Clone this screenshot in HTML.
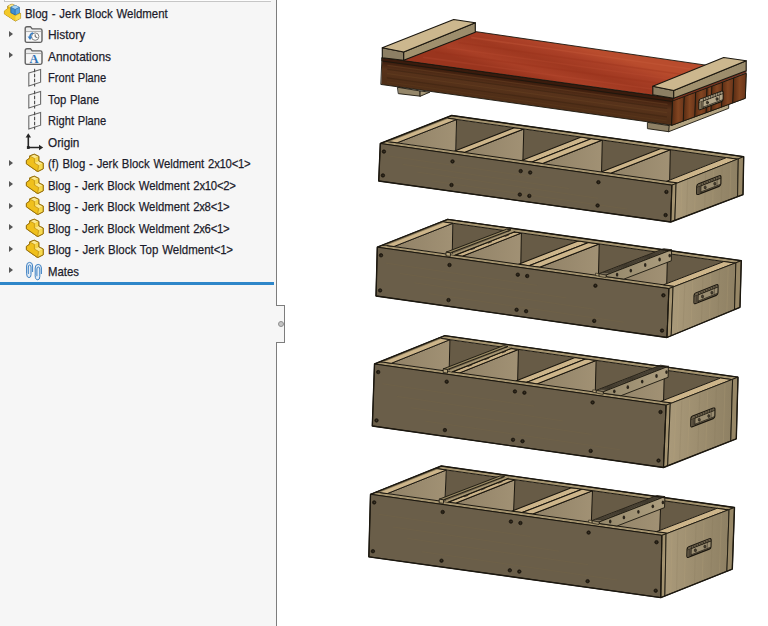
<!DOCTYPE html>
<html lang="en">
<head>
<meta charset="utf-8">
<title>Blog - Jerk Block Weldment</title>
<style>
html,body{margin:0;padding:0;background:#fff;}
body{width:768px;height:626px;position:relative;overflow:hidden;font-family:"Liberation Sans",sans-serif;}
#panel{position:absolute;left:0;top:0;width:276px;height:626px;background:#f6f6f6;}
#topline{position:absolute;left:4px;top:0;width:266px;height:1px;background:#fdfdfd;border-bottom:1px solid #c6c6c6;border-left:1px solid #c6c6c6;}
#vline{position:absolute;left:276px;top:0;width:1px;height:626px;background:#7d7d7d;}
#tab{position:absolute;left:276px;top:305px;width:9px;height:38px;background:#f6f6f6;border:1px solid #7d7d7d;border-left:none;box-sizing:border-box;}
#tabfill{position:absolute;left:275px;top:306px;width:3px;height:36px;background:#f6f6f6;}
#dot{position:absolute;left:277.5px;top:321px;width:4px;height:4px;border-radius:50%;background:#c4c4c4;border:1px solid #8f8f8f;box-sizing:content-box;}
#blue{position:absolute;left:0;top:282px;width:274px;height:3px;background:#2e86c9;}
.row{position:absolute;left:0;height:22px;width:276px;white-space:nowrap;}
.row span{position:absolute;top:0;line-height:22px;font-size:13.6px;color:#1b1b2a;-webkit-text-stroke:0.25px #1b1b2a;word-spacing:0.8px;}
.row span b{font-weight:normal;letter-spacing:-0.3px;}
.row svg{position:absolute;top:0;}
.arr{position:absolute;left:8.8px;top:6.4px;width:0;height:0;border-top:3.7px solid transparent;border-bottom:3.7px solid transparent;border-left:4.6px solid #565656;}
</style>
</head>
<body>
<div id="panel">
<div id="topline"></div>
<div class="row" style="top:2.90px">
<svg width="19" height="19" viewBox="0 0 20 20" style="left:3.4px;top:0.6px">
<polygon points="1.5,8.5 5,5.8 5,3.2 9.5,1.2 14.5,3.5 14.5,9 18.5,11 18.5,16 13,19 1.5,11.5" fill="#f0c21e" stroke="#9a7412" stroke-width="0.9" stroke-linejoin="round"/>
<polygon points="5,3.2 9.5,1.2 14.5,3.5 10,5.6" fill="#fbe98e"/>
<polygon points="1.5,8.5 5,5.8 10,8.5 13,15 13,19 1.5,11.5" fill="#f3c928"/>
<polygon points="13,14 18.5,11 18.5,16 13,19" fill="#f8dc55"/>
<polygon points="8.2,4.4 12.6,2.4 17.2,4.6 17.2,10.2 12.8,12.6 8.2,10.2" fill="#3f8fd2" stroke="#1f5f9e" stroke-width="0.8" stroke-linejoin="round"/>
<polygon points="8.2,4.4 12.6,2.4 17.2,4.6 12.8,6.8" fill="#a9d4f3"/>
<polygon points="12.8,6.8 17.2,4.6 17.2,10.2 12.8,12.6" fill="#5aa5e0"/>
<polyline points="8.2,4.4 12.8,6.8 17.2,4.6" fill="none" stroke="#1f5f9e" stroke-width="0.6"/>
<line x1="12.8" y1="6.8" x2="12.8" y2="12.6" stroke="#1f5f9e" stroke-width="0.6"/>
</svg>
<span id="t0" style="left:24.9px;transform-origin:0 50%;transform:scaleX(0.8398)">Blog - Jerk Block Weldment</span>
</div>
<div class="row" style="top:24.40px">
<div class="arr"></div>
<svg width="20" height="20" viewBox="0 0 20 20" style="left:24px;top:1px"><path d="M1.2,3.6 Q1.2,1.8 3,1.8 L6.6,1.8 L8.2,3.9 L16.4,3.9 Q18,3.9 18,5.6 L18,15.6 Q18,17.2 16.4,17.2 L2.8,17.2 Q1.2,17.2 1.2,15.6 Z" fill="#ececec" stroke="#626262" stroke-width="1.4" stroke-linejoin="round"/>
<path d="M1.8,6.6 L17.4,6.6" stroke="#9a9a9a" stroke-width="0.8"/>
<rect x="2.2" y="7.2" width="14.8" height="9.2" fill="#f7f7f7"/>
<circle cx="11.2" cy="11.6" r="3.7" fill="#fdfdfd" stroke="#777" stroke-width="0.9"/>
<path d="M11.2,9.4 L11.2,11.8 L13.4,12.6" fill="none" stroke="#333" stroke-width="0.8"/>
<path d="M9.2,8 Q5.8,8.6 6,12.4" fill="none" stroke="#3b7fc4" stroke-width="1.7"/>
<polygon points="3.6,11.6 8.4,11.8 6,15" fill="#3b7fc4"/>
</svg>
<span id="t1" style="left:48.2px;transform-origin:0 50%;transform:scaleX(0.8771)">History</span>
</div>
<div class="row" style="top:45.90px">
<div class="arr"></div>
<svg width="20" height="20" viewBox="0 0 20 20" style="left:24px;top:1px"><path d="M1.2,3.6 Q1.2,1.8 3,1.8 L6.6,1.8 L8.2,3.9 L16.4,3.9 Q18,3.9 18,5.6 L18,15.6 Q18,17.2 16.4,17.2 L2.8,17.2 Q1.2,17.2 1.2,15.6 Z" fill="#ececec" stroke="#626262" stroke-width="1.4" stroke-linejoin="round"/>
<path d="M1.8,6.6 L17.4,6.6" stroke="#9a9a9a" stroke-width="0.8"/>
<rect x="2.2" y="7.2" width="14.8" height="9.2" fill="#f7f7f7"/>
<text x="9.9" y="15.6" text-anchor="middle" font-family="Liberation Serif,serif" font-weight="bold" font-size="12.5" fill="#2f72b8">A</text>
</svg>
<span id="t2" style="left:48.2px;transform-origin:0 50%;transform:scaleX(0.8773)">Annotations</span>
</div>
<div class="row" style="top:67.40px">
<svg width="20" height="20" viewBox="0 0 20 20" style="left:24px;top:1px">
<polygon points="4.8,5 16.6,1.4 16.6,14.2 4.8,18" fill="none" stroke="#6b6b6b" stroke-width="1.1" stroke-linejoin="miter"/>
<line x1="10.6" y1="0.8" x2="10.6" y2="18.6" stroke="#4a4a4a" stroke-width="1.1" stroke-dasharray="3.4,1.6"/>
</svg>
<span id="t3" style="left:48.2px;transform-origin:0 50%;transform:scaleX(0.8188)">Front Plane</span>
</div>
<div class="row" style="top:88.90px">
<svg width="20" height="20" viewBox="0 0 20 20" style="left:24px;top:1px">
<polygon points="4.8,5 16.6,1.4 16.6,14.2 4.8,18" fill="none" stroke="#6b6b6b" stroke-width="1.1" stroke-linejoin="miter"/>
<line x1="10.6" y1="0.8" x2="10.6" y2="18.6" stroke="#4a4a4a" stroke-width="1.1" stroke-dasharray="3.4,1.6"/>
</svg>
<span id="t4" style="left:48.2px;transform-origin:0 50%;transform:scaleX(0.8324)">Top Plane</span>
</div>
<div class="row" style="top:110.40px">
<svg width="20" height="20" viewBox="0 0 20 20" style="left:24px;top:1px">
<polygon points="4.8,5 16.6,1.4 16.6,14.2 4.8,18" fill="none" stroke="#6b6b6b" stroke-width="1.1" stroke-linejoin="miter"/>
<line x1="10.6" y1="0.8" x2="10.6" y2="18.6" stroke="#4a4a4a" stroke-width="1.1" stroke-dasharray="3.4,1.6"/>
</svg>
<span id="t5" style="left:48.2px;transform-origin:0 50%;transform:scaleX(0.8186)">Right Plane</span>
</div>
<div class="row" style="top:131.90px">
<svg width="20" height="20" viewBox="0 0 20 20" style="left:24px;top:0px">
<path d="M4.3,16.6 L4.3,4.6 M3.2,15.5 L17,15.5" fill="none" stroke="#262626" stroke-width="1.6"/>
<polygon points="4.3,1.2 7,5.6 1.6,5.6" fill="#262626"/>
<polygon points="19.2,15.5 15,12.8 15,18.2" fill="#262626"/>
<rect x="2.9" y="14.1" width="2.8" height="2.8" fill="#262626"/>
</svg>
<span id="t6" style="left:48.2px;transform-origin:0 50%;transform:scaleX(0.8658)">Origin</span>
</div>
<div class="row" style="top:153.40px">
<div class="arr"></div>
<svg width="20" height="20" viewBox="0 0 20 20" style="left:24px;top:-1px">
<polygon points="2.4,8.4 5.6,6.2 5.6,4 10.2,2.2 14.8,4.4 14.8,9 19.2,11 19.2,16.8 13.6,19.6 2.4,11.8" fill="#f1c31f" stroke="#9a7412" stroke-width="1" stroke-linejoin="round"/>
<polygon points="5.6,4 10.2,2.2 14.8,4.4 10.4,6.4" fill="#fbe890"/>
<polygon points="10.4,6.4 14.8,4.4 14.8,9 10.4,11" fill="#f6d545"/>
<polygon points="10.4,11 14.8,9 19.2,11 14.6,13.4" fill="#fbe890"/>
<polygon points="14.6,13.4 19.2,11 19.2,16.8 13.6,19.6" fill="#f7d94e"/>
<polygon points="2.4,8.4 5.6,6.2 5.6,4 10.4,6.4 10.4,11 14.6,13.4 13.6,19.6 2.4,11.8" fill="#f0c01c"/>
<polyline points="5.6,4 10.4,6.4 10.4,11 14.6,13.4 13.6,19.6" fill="none" stroke="#b08416" stroke-width="0.6"/>
<polygon points="2.4,8.4 5.6,6.2 5.6,4 10.2,2.2 14.8,4.4 14.8,9 19.2,11 19.2,16.8 13.6,19.6 2.4,11.8" fill="none" stroke="#9a7412" stroke-width="1" stroke-linejoin="round"/>
</svg>
<span id="t7" style="left:48.2px;transform-origin:0 50%;transform:scaleX(0.8342)">(f) Blog - Jerk Block Weldment <b>2x10&lt;1&gt;</b></span>
</div>
<div class="row" style="top:174.90px">
<div class="arr"></div>
<svg width="20" height="20" viewBox="0 0 20 20" style="left:24px;top:-1px">
<polygon points="2.4,8.4 5.6,6.2 5.6,4 10.2,2.2 14.8,4.4 14.8,9 19.2,11 19.2,16.8 13.6,19.6 2.4,11.8" fill="#f1c31f" stroke="#9a7412" stroke-width="1" stroke-linejoin="round"/>
<polygon points="5.6,4 10.2,2.2 14.8,4.4 10.4,6.4" fill="#fbe890"/>
<polygon points="10.4,6.4 14.8,4.4 14.8,9 10.4,11" fill="#f6d545"/>
<polygon points="10.4,11 14.8,9 19.2,11 14.6,13.4" fill="#fbe890"/>
<polygon points="14.6,13.4 19.2,11 19.2,16.8 13.6,19.6" fill="#f7d94e"/>
<polygon points="2.4,8.4 5.6,6.2 5.6,4 10.4,6.4 10.4,11 14.6,13.4 13.6,19.6 2.4,11.8" fill="#f0c01c"/>
<polyline points="5.6,4 10.4,6.4 10.4,11 14.6,13.4 13.6,19.6" fill="none" stroke="#b08416" stroke-width="0.6"/>
<polygon points="2.4,8.4 5.6,6.2 5.6,4 10.2,2.2 14.8,4.4 14.8,9 19.2,11 19.2,16.8 13.6,19.6 2.4,11.8" fill="none" stroke="#9a7412" stroke-width="1" stroke-linejoin="round"/>
</svg>
<span id="t8" style="left:48.2px;transform-origin:0 50%;transform:scaleX(0.8330)">Blog - Jerk Block Weldment <b>2x10&lt;2&gt;</b></span>
</div>
<div class="row" style="top:196.40px">
<div class="arr"></div>
<svg width="20" height="20" viewBox="0 0 20 20" style="left:24px;top:-1px">
<polygon points="2.4,8.4 5.6,6.2 5.6,4 10.2,2.2 14.8,4.4 14.8,9 19.2,11 19.2,16.8 13.6,19.6 2.4,11.8" fill="#f1c31f" stroke="#9a7412" stroke-width="1" stroke-linejoin="round"/>
<polygon points="5.6,4 10.2,2.2 14.8,4.4 10.4,6.4" fill="#fbe890"/>
<polygon points="10.4,6.4 14.8,4.4 14.8,9 10.4,11" fill="#f6d545"/>
<polygon points="10.4,11 14.8,9 19.2,11 14.6,13.4" fill="#fbe890"/>
<polygon points="14.6,13.4 19.2,11 19.2,16.8 13.6,19.6" fill="#f7d94e"/>
<polygon points="2.4,8.4 5.6,6.2 5.6,4 10.4,6.4 10.4,11 14.6,13.4 13.6,19.6 2.4,11.8" fill="#f0c01c"/>
<polyline points="5.6,4 10.4,6.4 10.4,11 14.6,13.4 13.6,19.6" fill="none" stroke="#b08416" stroke-width="0.6"/>
<polygon points="2.4,8.4 5.6,6.2 5.6,4 10.2,2.2 14.8,4.4 14.8,9 19.2,11 19.2,16.8 13.6,19.6 2.4,11.8" fill="none" stroke="#9a7412" stroke-width="1" stroke-linejoin="round"/>
</svg>
<span id="t9" style="left:48.2px;transform-origin:0 50%;transform:scaleX(0.8319)">Blog - Jerk Block Weldment <b>2x8&lt;1&gt;</b></span>
</div>
<div class="row" style="top:217.90px">
<div class="arr"></div>
<svg width="20" height="20" viewBox="0 0 20 20" style="left:24px;top:-1px">
<polygon points="2.4,8.4 5.6,6.2 5.6,4 10.2,2.2 14.8,4.4 14.8,9 19.2,11 19.2,16.8 13.6,19.6 2.4,11.8" fill="#f1c31f" stroke="#9a7412" stroke-width="1" stroke-linejoin="round"/>
<polygon points="5.6,4 10.2,2.2 14.8,4.4 10.4,6.4" fill="#fbe890"/>
<polygon points="10.4,6.4 14.8,4.4 14.8,9 10.4,11" fill="#f6d545"/>
<polygon points="10.4,11 14.8,9 19.2,11 14.6,13.4" fill="#fbe890"/>
<polygon points="14.6,13.4 19.2,11 19.2,16.8 13.6,19.6" fill="#f7d94e"/>
<polygon points="2.4,8.4 5.6,6.2 5.6,4 10.4,6.4 10.4,11 14.6,13.4 13.6,19.6 2.4,11.8" fill="#f0c01c"/>
<polyline points="5.6,4 10.4,6.4 10.4,11 14.6,13.4 13.6,19.6" fill="none" stroke="#b08416" stroke-width="0.6"/>
<polygon points="2.4,8.4 5.6,6.2 5.6,4 10.2,2.2 14.8,4.4 14.8,9 19.2,11 19.2,16.8 13.6,19.6 2.4,11.8" fill="none" stroke="#9a7412" stroke-width="1" stroke-linejoin="round"/>
</svg>
<span id="t10" style="left:48.2px;transform-origin:0 50%;transform:scaleX(0.8319)">Blog - Jerk Block Weldment <b>2x6&lt;1&gt;</b></span>
</div>
<div class="row" style="top:239.40px">
<div class="arr"></div>
<svg width="20" height="20" viewBox="0 0 20 20" style="left:24px;top:-1px">
<polygon points="2.4,8.4 5.6,6.2 5.6,4 10.2,2.2 14.8,4.4 14.8,9 19.2,11 19.2,16.8 13.6,19.6 2.4,11.8" fill="#f1c31f" stroke="#9a7412" stroke-width="1" stroke-linejoin="round"/>
<polygon points="5.6,4 10.2,2.2 14.8,4.4 10.4,6.4" fill="#fbe890"/>
<polygon points="10.4,6.4 14.8,4.4 14.8,9 10.4,11" fill="#f6d545"/>
<polygon points="10.4,11 14.8,9 19.2,11 14.6,13.4" fill="#fbe890"/>
<polygon points="14.6,13.4 19.2,11 19.2,16.8 13.6,19.6" fill="#f7d94e"/>
<polygon points="2.4,8.4 5.6,6.2 5.6,4 10.4,6.4 10.4,11 14.6,13.4 13.6,19.6 2.4,11.8" fill="#f0c01c"/>
<polyline points="5.6,4 10.4,6.4 10.4,11 14.6,13.4 13.6,19.6" fill="none" stroke="#b08416" stroke-width="0.6"/>
<polygon points="2.4,8.4 5.6,6.2 5.6,4 10.2,2.2 14.8,4.4 14.8,9 19.2,11 19.2,16.8 13.6,19.6 2.4,11.8" fill="none" stroke="#9a7412" stroke-width="1" stroke-linejoin="round"/>
</svg>
<span id="t11" style="left:48.2px;transform-origin:0 50%;transform:scaleX(0.8449)">Blog - Jerk Block Top Weldment<b>&lt;1&gt;</b></span>
</div>
<div class="row" style="top:260.90px">
<div class="arr"></div>
<svg width="20" height="20" viewBox="0 0 20 20" style="left:24px;top:0px">
<path d="M2.6,12.8 L2.6,5 Q2.6,1.4 5.6,1.4 Q8.6,1.4 8.6,5 L8.6,11" fill="#e3edf7" stroke="#3d80c2" stroke-width="1"/>
<path d="M2.6,12.6 Q2.6,16.6 5,16.6 Q7,16.6 7,13.6 L7,6 Q7,4 5.6,4 Q4.3,4 4.3,6 L4.3,13" fill="#e3edf7" stroke="#3d80c2" stroke-width="1"/>
<path d="M11.2,14.8 L11.2,7 Q11.2,3.4 14.2,3.4 Q17.4,3.4 17.4,7 L17.4,13" fill="#e3edf7" stroke="#3d80c2" stroke-width="1"/>
<path d="M11.2,14.6 Q11.2,18.8 13.8,18.8 Q15.8,18.8 15.8,15.6 L15.8,8 Q15.8,6 14.3,6 Q12.9,6 12.9,8 L12.9,15.2" fill="#e3edf7" stroke="#3d80c2" stroke-width="1"/>
</svg>
<span id="t12" style="left:48.2px;transform-origin:0 50%;transform:scaleX(0.8344)">Mates</span>
</div>
<div id="blue"></div>
</div>
<div id="vline"></div>
<div id="tab"></div>
<div id="tabfill"></div>
<div id="dot"></div>
<svg width="768" height="626" viewBox="0 0 768 626" style="position:absolute;left:0;top:0">
<defs>
<linearGradient id="g1" gradientUnits="userSpaceOnUse" x1="0" y1="70" x2="0" y2="110"><stop offset="0" stop-color="#5f3a20"/><stop offset="1" stop-color="#4a2c17"/></linearGradient>
<linearGradient id="wood" gradientUnits="userSpaceOnUse" x1="400" y1="62" x2="394" y2="104"><stop offset="0" stop-color="#38190b"/><stop offset="0.22" stop-color="#58331b"/><stop offset="0.5" stop-color="#4f2e17"/><stop offset="0.8" stop-color="#58351b"/><stop offset="1" stop-color="#3f220f"/></linearGradient>
<linearGradient id="g2" gradientUnits="userSpaceOnUse" x1="672.9" y1="0" x2="684.5" y2="0"><stop offset="0" stop-color="#5f2f15"/><stop offset="0.45" stop-color="#824521"/><stop offset="1" stop-color="#69341a"/></linearGradient>
<linearGradient id="g3" gradientUnits="userSpaceOnUse" x1="684.5" y1="0" x2="696" y2="0"><stop offset="0" stop-color="#5f2f15"/><stop offset="0.45" stop-color="#824521"/><stop offset="1" stop-color="#69341a"/></linearGradient>
<linearGradient id="g4" gradientUnits="userSpaceOnUse" x1="696" y1="0" x2="707.3" y2="0"><stop offset="0" stop-color="#5f2f15"/><stop offset="0.45" stop-color="#824521"/><stop offset="1" stop-color="#69341a"/></linearGradient>
<linearGradient id="g5" gradientUnits="userSpaceOnUse" x1="707.3" y1="0" x2="712.2" y2="0"><stop offset="0" stop-color="#5f2f15"/><stop offset="0.45" stop-color="#824521"/><stop offset="1" stop-color="#69341a"/></linearGradient>
<linearGradient id="g6" gradientUnits="userSpaceOnUse" x1="712.2" y1="0" x2="722.8" y2="0"><stop offset="0" stop-color="#5f2f15"/><stop offset="0.45" stop-color="#824521"/><stop offset="1" stop-color="#69341a"/></linearGradient>
<linearGradient id="g7" gradientUnits="userSpaceOnUse" x1="722.8" y1="0" x2="734" y2="0"><stop offset="0" stop-color="#5f2f15"/><stop offset="0.45" stop-color="#824521"/><stop offset="1" stop-color="#69341a"/></linearGradient>
<linearGradient id="g8" gradientUnits="userSpaceOnUse" x1="734" y1="0" x2="746.2" y2="0"><stop offset="0" stop-color="#5f2f15"/><stop offset="0.45" stop-color="#824521"/><stop offset="1" stop-color="#69341a"/></linearGradient>
<linearGradient id="red" gradientUnits="userSpaceOnUse" x1="560" y1="42" x2="548" y2="84"><stop offset="0" stop-color="#b94c2d"/><stop offset="0.22" stop-color="#ab4027"/><stop offset="0.5" stop-color="#9f3820"/><stop offset="0.78" stop-color="#a93f26"/><stop offset="1" stop-color="#9a351e"/></linearGradient>
<linearGradient id="g9" gradientUnits="userSpaceOnUse" x1="404" y1="0" x2="475" y2="0"><stop offset="0" stop-color="#a3936f"/><stop offset="1" stop-color="#9a8b6b"/></linearGradient>
<linearGradient id="g10" gradientUnits="userSpaceOnUse" x1="674" y1="0" x2="746" y2="0"><stop offset="0" stop-color="#a3936f"/><stop offset="1" stop-color="#9a8b6b"/></linearGradient>
<clipPath id="c_b1"><polygon points="397.1,142.8 666.6,181.3 726.4,157.6 456.6,119.5"/></clipPath>
<linearGradient id="g11" gradientUnits="userSpaceOnUse" x1="397.1" y1="0" x2="456.6" y2="0"><stop offset="0" stop-color="#918267"/><stop offset="1" stop-color="#a19174"/></linearGradient>
<linearGradient id="g12" gradientUnits="userSpaceOnUse" x1="464.2" y1="0" x2="523.8" y2="0"><stop offset="0" stop-color="#918267"/><stop offset="1" stop-color="#a19174"/></linearGradient>
<linearGradient id="g13" gradientUnits="userSpaceOnUse" x1="542.6" y1="0" x2="602.3" y2="0"><stop offset="0" stop-color="#918267"/><stop offset="1" stop-color="#a19174"/></linearGradient>
<linearGradient id="g14" gradientUnits="userSpaceOnUse" x1="610.6" y1="0" x2="670.3" y2="0"><stop offset="0" stop-color="#918267"/><stop offset="1" stop-color="#a19174"/></linearGradient>
<linearGradient id="g15" gradientUnits="userSpaceOnUse" x1="676.1" y1="0" x2="738.3" y2="0"><stop offset="0" stop-color="#a99979"/><stop offset="1" stop-color="#8e8063"/></linearGradient>
<clipPath id="c_b2"><polygon points="394,246.5 663.6,284.8 723.9,261.5 452.8,223.3"/></clipPath>
<linearGradient id="g16" gradientUnits="userSpaceOnUse" x1="394" y1="0" x2="452.8" y2="0"><stop offset="0" stop-color="#918267"/><stop offset="1" stop-color="#a19174"/></linearGradient>
<linearGradient id="g17" gradientUnits="userSpaceOnUse" x1="462.3" y1="0" x2="521.4" y2="0"><stop offset="0" stop-color="#918267"/><stop offset="1" stop-color="#a19174"/></linearGradient>
<linearGradient id="g18" gradientUnits="userSpaceOnUse" x1="539.6" y1="0" x2="599.2" y2="0"><stop offset="0" stop-color="#918267"/><stop offset="1" stop-color="#a19174"/></linearGradient>
<linearGradient id="g19" gradientUnits="userSpaceOnUse" x1="607.6" y1="0" x2="667.5" y2="0"><stop offset="0" stop-color="#918267"/><stop offset="1" stop-color="#a19174"/></linearGradient>
<linearGradient id="g20" gradientUnits="userSpaceOnUse" x1="606" y1="0" x2="671.6" y2="0"><stop offset="0" stop-color="#95886b"/><stop offset="1" stop-color="#ac9d7e"/></linearGradient>
<linearGradient id="g21" gradientUnits="userSpaceOnUse" x1="673.1" y1="0" x2="735.9" y2="0"><stop offset="0" stop-color="#a99979"/><stop offset="1" stop-color="#8e8063"/></linearGradient>
<clipPath id="c_b3"><polygon points="391.2,363.3 660.8,401.4 720.6,378 449.9,339.7"/></clipPath>
<linearGradient id="g22" gradientUnits="userSpaceOnUse" x1="391.2" y1="0" x2="449.9" y2="0"><stop offset="0" stop-color="#918267"/><stop offset="1" stop-color="#a19174"/></linearGradient>
<linearGradient id="g23" gradientUnits="userSpaceOnUse" x1="459.5" y1="0" x2="518.4" y2="0"><stop offset="0" stop-color="#918267"/><stop offset="1" stop-color="#a19174"/></linearGradient>
<linearGradient id="g24" gradientUnits="userSpaceOnUse" x1="536.8" y1="0" x2="596.1" y2="0"><stop offset="0" stop-color="#918267"/><stop offset="1" stop-color="#a19174"/></linearGradient>
<linearGradient id="g25" gradientUnits="userSpaceOnUse" x1="604.8" y1="0" x2="664.4" y2="0"><stop offset="0" stop-color="#918267"/><stop offset="1" stop-color="#a19174"/></linearGradient>
<linearGradient id="g26" gradientUnits="userSpaceOnUse" x1="603.2" y1="0" x2="668.4" y2="0"><stop offset="0" stop-color="#95886b"/><stop offset="1" stop-color="#ac9d7e"/></linearGradient>
<linearGradient id="g27" gradientUnits="userSpaceOnUse" x1="670.3" y1="0" x2="732.6" y2="0"><stop offset="0" stop-color="#a99979"/><stop offset="1" stop-color="#8e8063"/></linearGradient>
<clipPath id="c_b4"><polygon points="387.2,493.6 656.6,531.6 717.1,508.3 446.3,470"/></clipPath>
<linearGradient id="g28" gradientUnits="userSpaceOnUse" x1="387.2" y1="0" x2="446.3" y2="0"><stop offset="0" stop-color="#918267"/><stop offset="1" stop-color="#a19174"/></linearGradient>
<linearGradient id="g29" gradientUnits="userSpaceOnUse" x1="455.5" y1="0" x2="514.9" y2="0"><stop offset="0" stop-color="#918267"/><stop offset="1" stop-color="#a19174"/></linearGradient>
<linearGradient id="g30" gradientUnits="userSpaceOnUse" x1="532.7" y1="0" x2="592.5" y2="0"><stop offset="0" stop-color="#918267"/><stop offset="1" stop-color="#a19174"/></linearGradient>
<linearGradient id="g31" gradientUnits="userSpaceOnUse" x1="600.7" y1="0" x2="660.8" y2="0"><stop offset="0" stop-color="#918267"/><stop offset="1" stop-color="#a19174"/></linearGradient>
<linearGradient id="g32" gradientUnits="userSpaceOnUse" x1="599.1" y1="0" x2="664.9" y2="0"><stop offset="0" stop-color="#95886b"/><stop offset="1" stop-color="#ac9d7e"/></linearGradient>
<linearGradient id="g33" gradientUnits="userSpaceOnUse" x1="666.1" y1="0" x2="729.1" y2="0"><stop offset="0" stop-color="#a99979"/><stop offset="1" stop-color="#8e8063"/></linearGradient>
</defs>
<g id="top" stroke-linecap="round">
<polygon points="397.8,87.3 420.3,91 420.3,96.2 398.7,93.7" fill="#95876a" stroke="#1b170f" stroke-width="0.9" stroke-linejoin="round"/>
<polygon points="420.3,91 429.8,92.2 420.3,96.2" fill="#a79877" stroke="#1b170f" stroke-width="0.9" stroke-linejoin="round"/>
<polygon points="668.7,125.4 728.7,103.6 728.7,108.3 668.7,131.7" fill="#b3a380" stroke="#1b170f" stroke-width="0.9" stroke-linejoin="round"/>
<polygon points="647.8,122.4 669.2,125.6 668.7,131.7 647.8,128.7" fill="#8f8165" stroke="#1b170f" stroke-width="0.9" stroke-linejoin="round"/>
<polygon points="382.3,57.8 673.2,98.6 672,125.2 381.2,84.5" fill="url(#wood)" stroke="#1b170f" stroke-width="0.9" stroke-linejoin="round"/>
<line x1="387.8" y1="65.3" x2="667.1" y2="104.4" stroke="#6e4525" stroke-width="1.2" opacity="0.45"/>
<line x1="387.7" y1="69.3" x2="666.9" y2="108.4" stroke="#36200f" stroke-width="1.2" opacity="0.45"/>
<line x1="387.5" y1="73.6" x2="666.7" y2="112.7" stroke="#6a4423" stroke-width="1.2" opacity="0.4"/>
<line x1="387.3" y1="77.8" x2="666.5" y2="116.9" stroke="#36200f" stroke-width="1.2" opacity="0.4"/>
<line x1="387.2" y1="81.8" x2="666.3" y2="120.9" stroke="#64401f" stroke-width="1.2" opacity="0.35"/>
<polygon points="382.3,57.6 673.3,98.2 673.3,101.6 382.3,61" fill="#3a1b0d" stroke="#1b170f" stroke-width="0.9" stroke-linejoin="round"/>
<polygon points="672.9,100.8 746.2,73.3 745.3,98.3 672,125.2" fill="#7a4122" stroke="#1b170f" stroke-width="0.9" stroke-linejoin="round"/>
<polygon points="672.9,100.8 684.5,96.4 683.6,120.9 672,125.2" fill="url(#g2)" stroke="#1b170f" stroke-width="0.9" stroke-linejoin="round"/>
<polygon points="684.5,96.4 696,92.1 695.1,116.7 683.6,120.9" fill="url(#g3)" stroke="#1b170f" stroke-width="0.9" stroke-linejoin="round"/>
<polygon points="696,92.1 707.3,87.9 706.4,112.6 695.1,116.7" fill="url(#g4)" stroke="#1b170f" stroke-width="0.9" stroke-linejoin="round"/>
<polygon points="707.3,87.9 712.2,86.1 711.3,110.8 706.4,112.6" fill="url(#g5)" stroke="#1b170f" stroke-width="0.9" stroke-linejoin="round"/>
<polygon points="712.2,86.1 722.8,82.1 721.9,106.9 711.3,110.8" fill="url(#g6)" stroke="#1b170f" stroke-width="0.9" stroke-linejoin="round"/>
<polygon points="722.8,82.1 734,77.9 733.1,102.8 721.9,106.9" fill="url(#g7)" stroke="#1b170f" stroke-width="0.9" stroke-linejoin="round"/>
<polygon points="734,77.9 746.2,73.3 745.3,98.3 733.1,102.8" fill="url(#g8)" stroke="#1b170f" stroke-width="0.9" stroke-linejoin="round"/>
<polygon points="673.5,98.3 746.2,70.8 746.2,72.6 673.3,100.4" fill="#8f3520" stroke="#1b170f" stroke-width="0.6" stroke-linejoin="round"/>
<path d="M700.7 99.1 L721.5 91.3 Q723.2 90.7 723.1 92.5 L723 99.3 Q723 101.1 721.3 101.7 L700.5 109.5 Q698.8 110.1 698.9 108.3 L699 101.5 Q699 99.7 700.7 99.1 Z" fill="#a0937a" stroke="#1b170f" stroke-width="1.25" stroke-linejoin="round"/>
<polygon points="700.1,99.6 722,91.4 722.7,93.8 699.5,102.5" fill="#a79a80"/>
<line x1="703.3" y1="98.4" x2="703.5" y2="100.9" stroke="#2a241a" stroke-width="0.7"/>
<line x1="705.7" y1="97.5" x2="705.9" y2="100" stroke="#2a241a" stroke-width="0.7"/>
<line x1="708.1" y1="96.6" x2="708.3" y2="99.1" stroke="#2a241a" stroke-width="0.7"/>
<line x1="710.5" y1="95.7" x2="710.7" y2="98.2" stroke="#2a241a" stroke-width="0.7"/>
<line x1="712.9" y1="94.8" x2="713.1" y2="97.3" stroke="#2a241a" stroke-width="0.7"/>
<line x1="715.3" y1="93.9" x2="715.4" y2="96.4" stroke="#2a241a" stroke-width="0.7"/>
<line x1="717.6" y1="93" x2="717.8" y2="95.5" stroke="#2a241a" stroke-width="0.7"/>
<line x1="720" y1="92.1" x2="720.2" y2="94.7" stroke="#2a241a" stroke-width="0.7"/>
<line x1="699.3" y1="102.6" x2="722.8" y2="93.8" stroke="#1b170f" stroke-width="0.9"/>
<polygon points="699.4,102.6 703.3,101.1 703.1,108.1 699.3,109.4" fill="#8a7d63"/>
<line x1="701.4" y1="102.2" x2="701.3" y2="108.4" stroke="#3a3327" stroke-width="0.6"/>
<line x1="703.3" y1="101.1" x2="703.1" y2="108.3" stroke="#1b170f" stroke-width="0.9"/>
<polygon points="703.6,101.4 722.5,94.3 722.4,99.7 703.5,106.8" fill="#b5a88b"/>
<line x1="703.2" y1="107.1" x2="722.5" y2="99.8" stroke="#2f291f" stroke-width="0.8"/>
<ellipse cx="707.4" cy="102.6" rx="1.05" ry="1.5" fill="#4b4234" stroke="#1b170f" stroke-width="0.6"/>
<ellipse cx="717" cy="99" rx="1.05" ry="1.5" fill="#4b4234" stroke="#1b170f" stroke-width="0.6"/>
<line x1="719.4" y1="95.3" x2="719.3" y2="101" stroke="#3a3327" stroke-width="0.6"/>
<polygon points="402.5,60.3 475,31.5 706.3,65.2 652.8,94.9" fill="url(#red)" stroke="#1b170f" stroke-width="0.9" stroke-linejoin="round"/>
<line x1="471.8" y1="37.6" x2="690.4" y2="69" stroke="#cc6040" stroke-width="1.6" opacity="0.3"/>
<line x1="459.3" y1="42.8" x2="680.9" y2="74.3" stroke="#98301a" stroke-width="1.6" opacity="0.3"/>
<line x1="447.5" y1="47.7" x2="671.9" y2="79.2" stroke="#c05236" stroke-width="1.6" opacity="0.22"/>
<line x1="436.3" y1="52.3" x2="663.4" y2="83.9" stroke="#98301a" stroke-width="1.6" opacity="0.3"/>
<line x1="423.8" y1="57.4" x2="653.9" y2="89.2" stroke="#bd5036" stroke-width="1.6" opacity="0.25"/>
<polygon points="382.3,47.8 403.7,52 403.7,60.3 382.3,57.8" fill="#8c7f64" stroke="#1b170f" stroke-width="1.15" stroke-linejoin="round"/>
<polygon points="403.7,52 475.3,22.8 475.3,32.3 403.7,60.3" fill="url(#g9)" stroke="#1b170f" stroke-width="1.15" stroke-linejoin="round"/>
<polygon points="382.3,47.8 453.7,19.5 475.3,22.8 403.7,52" fill="#ccb78e" stroke="#1b170f" stroke-width="1.15" stroke-linejoin="round"/>
<polygon points="652.8,86.3 673.7,90.5 673.7,98.3 652.8,94.7" fill="#8c7f64" stroke="#1b170f" stroke-width="1.15" stroke-linejoin="round"/>
<polygon points="673.7,90.5 746.2,60.8 746.2,70.8 673.7,98.3" fill="url(#g10)" stroke="#1b170f" stroke-width="1.15" stroke-linejoin="round"/>
<polygon points="652.8,86.3 723.7,57.5 746.2,60.8 673.7,90.5" fill="#ccb78e" stroke="#1b170f" stroke-width="1.15" stroke-linejoin="round"/>
</g>
<g id="b1">
<g clip-path="url(#c_b1)">
<polygon points="456.6,119.5 726.4,157.6 725.6,195.5 455.5,158.1" fill="#675b46"/>
<polygon points="397.1,142.8 456.6,119.5 455.5,158.1 395.5,180.4" fill="url(#g11)" stroke="#1b170f" stroke-width="1.0" stroke-linejoin="round"/>
<polygon points="464.2,152.4 523.8,129 522.7,167.4 462.7,189.8" fill="url(#g12)" stroke="#1b170f" stroke-width="1.0" stroke-linejoin="round"/>
<polygon points="454.8,151.1 464.2,152.4 523.8,129 514.4,127.7" fill="#cdb58a" stroke="#1b170f" stroke-width="1.1" stroke-linejoin="round"/>
<polygon points="542.6,163.6 602.3,140.1 601.4,178.3 541.3,200.9" fill="url(#g13)" stroke="#1b170f" stroke-width="1.0" stroke-linejoin="round"/>
<polygon points="521.6,160.6 532.1,162.1 591.8,138.6 581.3,137.1" fill="#cdb58a" stroke="#1b170f" stroke-width="1.1" stroke-linejoin="round"/>
<polygon points="532.1,162.1 542.6,163.6 602.3,140.1 591.8,138.6" fill="#cdb58a" stroke="#1b170f" stroke-width="1.1" stroke-linejoin="round"/>
<polygon points="610.6,173.3 670.3,149.7 669.5,187.7 609.3,210.4" fill="url(#g14)" stroke="#1b170f" stroke-width="1.0" stroke-linejoin="round"/>
<polygon points="601.2,172 610.6,173.3 670.3,149.7 661,148.4" fill="#cdb58a" stroke="#1b170f" stroke-width="1.1" stroke-linejoin="round"/>
</g>
<polygon points="445.5,117.9 737.5,159.2 743.7,156.7 451.7,115.5" fill="#a5946f" stroke="#1b170f" stroke-width="1.0" stroke-linejoin="round"/>
<polygon points="380.3,143.5 671.9,185.2 677.6,182.9 386,141.3" fill="#a5946f" stroke="#1b170f" stroke-width="1.0" stroke-linejoin="round"/>
<polygon points="386,141.3 397.1,142.8 456.6,119.5 445.5,117.9" fill="#cdb58a" stroke="#1b170f" stroke-width="1.0" stroke-linejoin="round"/>
<polygon points="386,141.3 389.2,141.7 448.7,118.4 445.5,117.9" fill="#857759"/>
<polygon points="666.6,181.3 677.6,182.9 737.5,159.2 726.4,157.6" fill="#cdb58a" stroke="#1b170f" stroke-width="1.0" stroke-linejoin="round"/>
<polygon points="380.3,143.5 671.9,185.2 670.7,222 378.7,181" fill="#6a5e49" stroke="#1b170f" stroke-width="1.0" stroke-linejoin="round"/>
<line x1="388.6" y1="156" x2="540.2" y2="178.1" stroke="#7d6a45" stroke-width="1.0" opacity="0.2"/>
<line x1="402.9" y1="164.4" x2="569.2" y2="188.6" stroke="#7d6a45" stroke-width="1.0" opacity="0.2"/>
<line x1="417.2" y1="172.1" x2="598.2" y2="198.3" stroke="#7d6a45" stroke-width="1.0" opacity="0.2"/>
<line x1="431.6" y1="180.9" x2="627.1" y2="209" stroke="#7d6a45" stroke-width="1.0" opacity="0.2"/>
<polygon points="671.9,185.2 676.1,183.5 674.9,220.4 670.7,222" fill="#a3926f" stroke="#1b170f" stroke-width="0.9" stroke-linejoin="round"/>
<polygon points="676.1,183.5 738.3,158.8 737.6,196.7 674.9,220.4" fill="url(#g15)" stroke="#1b170f" stroke-width="0.9" stroke-linejoin="round"/>
<line x1="681.9" y1="182.3" x2="680.9" y2="217.1" stroke="#c2ad82" stroke-width="1.1" opacity="0.16"/>
<line x1="687.7" y1="180" x2="686.6" y2="214.9" stroke="#7d6f54" stroke-width="1.1" opacity="0.16"/>
<line x1="695.6" y1="176.9" x2="694.6" y2="211.9" stroke="#c2ad82" stroke-width="1.1" opacity="0.16"/>
<line x1="705.6" y1="172.9" x2="704.7" y2="208" stroke="#7d6f54" stroke-width="1.1" opacity="0.16"/>
<line x1="713.5" y1="169.8" x2="712.7" y2="205" stroke="#c2ad82" stroke-width="1.1" opacity="0.16"/>
<line x1="722.1" y1="166.4" x2="721.3" y2="201.8" stroke="#7d6f54" stroke-width="1.1" opacity="0.16"/>
<line x1="730.8" y1="163" x2="730" y2="198.5" stroke="#c2ad82" stroke-width="1.1" opacity="0.16"/>
<polygon points="738.3,158.8 743.7,156.7 743,194.7 737.6,196.7" fill="#978766" stroke="#1b170f" stroke-width="0.9" stroke-linejoin="round"/>
<polygon points="380.3,143.5 451.7,115.5 743.7,156.7 743,194.7 670.7,222 378.7,181" fill="none" stroke="#1b170f" stroke-width="1.35" stroke-linejoin="round"/>
<line x1="671.9" y1="185.2" x2="670.7" y2="222" stroke="#1b170f" stroke-width="1.2"/>
<circle cx="383.9" cy="151.6" r="1.75" fill="#241e14" stroke="#17130c" stroke-width="0.7"/>
<circle cx="384.1" cy="151.5" r="0.45" fill="#5a503e"/>
<circle cx="382.9" cy="175.4" r="1.75" fill="#241e14" stroke="#17130c" stroke-width="0.7"/>
<circle cx="383.1" cy="175.3" r="0.45" fill="#5a503e"/>
<circle cx="452.5" cy="161.4" r="1.75" fill="#241e14" stroke="#17130c" stroke-width="0.7"/>
<circle cx="452.6" cy="161.3" r="0.45" fill="#5a503e"/>
<circle cx="451.5" cy="185" r="1.75" fill="#241e14" stroke="#17130c" stroke-width="0.7"/>
<circle cx="451.7" cy="184.9" r="0.45" fill="#5a503e"/>
<circle cx="520.7" cy="171.1" r="1.75" fill="#241e14" stroke="#17130c" stroke-width="0.7"/>
<circle cx="520.9" cy="171" r="0.45" fill="#5a503e"/>
<circle cx="519.8" cy="194.6" r="1.75" fill="#241e14" stroke="#17130c" stroke-width="0.7"/>
<circle cx="520" cy="194.5" r="0.45" fill="#5a503e"/>
<circle cx="530.2" cy="172.5" r="1.75" fill="#241e14" stroke="#17130c" stroke-width="0.7"/>
<circle cx="530.3" cy="172.4" r="0.45" fill="#5a503e"/>
<circle cx="529.3" cy="195.9" r="1.75" fill="#241e14" stroke="#17130c" stroke-width="0.7"/>
<circle cx="529.5" cy="195.8" r="0.45" fill="#5a503e"/>
<circle cx="598.4" cy="182.2" r="1.75" fill="#241e14" stroke="#17130c" stroke-width="0.7"/>
<circle cx="598.6" cy="182.1" r="0.45" fill="#5a503e"/>
<circle cx="597.6" cy="205.5" r="1.75" fill="#241e14" stroke="#17130c" stroke-width="0.7"/>
<circle cx="597.8" cy="205.4" r="0.45" fill="#5a503e"/>
<circle cx="666.4" cy="191.9" r="1.75" fill="#241e14" stroke="#17130c" stroke-width="0.7"/>
<circle cx="666.6" cy="191.8" r="0.45" fill="#5a503e"/>
<circle cx="665.6" cy="215.1" r="1.75" fill="#241e14" stroke="#17130c" stroke-width="0.7"/>
<circle cx="665.8" cy="215" r="0.45" fill="#5a503e"/>
<path d="M698.6 183.9 L719.3 175.9 Q720.9 175.2 720.9 177 L720.8 183.8 Q720.7 185.6 719 186.3 L698.3 194.3 Q696.7 195 696.7 193.2 L696.8 186.4 Q696.9 184.6 698.6 183.9 Z" fill="#786c55" stroke="#1b170f" stroke-width="1.25" stroke-linejoin="round"/>
<polygon points="698,184.4 719.8,176 720.5,178.4 697.4,187.3" fill="#6a5f4a"/>
<line x1="701.2" y1="183.2" x2="701.3" y2="185.7" stroke="#2a241a" stroke-width="0.7"/>
<line x1="703.5" y1="182.3" x2="703.7" y2="184.8" stroke="#2a241a" stroke-width="0.7"/>
<line x1="705.9" y1="181.4" x2="706.1" y2="183.9" stroke="#2a241a" stroke-width="0.7"/>
<line x1="708.3" y1="180.4" x2="708.5" y2="182.9" stroke="#2a241a" stroke-width="0.7"/>
<line x1="710.7" y1="179.5" x2="710.9" y2="182" stroke="#2a241a" stroke-width="0.7"/>
<line x1="713" y1="178.6" x2="713.2" y2="181.1" stroke="#2a241a" stroke-width="0.7"/>
<line x1="715.4" y1="177.7" x2="715.6" y2="180.2" stroke="#2a241a" stroke-width="0.7"/>
<line x1="717.8" y1="176.8" x2="718" y2="179.3" stroke="#2a241a" stroke-width="0.7"/>
<line x1="697.2" y1="187.4" x2="720.6" y2="178.4" stroke="#1b170f" stroke-width="0.9"/>
<polygon points="697.3,187.4 701.1,185.9 701,192.9 697.1,194.2" fill="#5f5543"/>
<line x1="699.2" y1="187" x2="699.1" y2="193.2" stroke="#3a3327" stroke-width="0.6"/>
<line x1="701.1" y1="185.9" x2="701" y2="193.1" stroke="#1b170f" stroke-width="0.9"/>
<polygon points="701.5,186.2 720.3,178.9 720.2,184.3 701.4,191.6" fill="#9a8d71"/>
<line x1="701" y1="191.9" x2="720.3" y2="184.4" stroke="#2f291f" stroke-width="0.8"/>
<ellipse cx="705.2" cy="187.4" rx="1.05" ry="1.5" fill="#4b4234" stroke="#1b170f" stroke-width="0.6"/>
<ellipse cx="714.8" cy="183.7" rx="1.05" ry="1.5" fill="#4b4234" stroke="#1b170f" stroke-width="0.6"/>
<line x1="717.1" y1="179.9" x2="717" y2="185.6" stroke="#3a3327" stroke-width="0.6"/>
</g>
<g id="b2">
<g clip-path="url(#c_b2)">
<polygon points="452.8,223.3 723.9,261.5 722.6,308.3 452,270" fill="#675b46"/>
<polygon points="394,246.5 452.8,223.3 452,270 392.7,295.2" fill="url(#g16)" stroke="#1b170f" stroke-width="1.0" stroke-linejoin="round"/>
<polygon points="462.3,256.2 521.4,233 520.5,279.7 460.9,304.9" fill="url(#g17)" stroke="#1b170f" stroke-width="1.0" stroke-linejoin="round"/>
<polygon points="455.3,255.2 462.3,256.2 521.4,233 514.4,232" fill="#c9b186" stroke="#1b170f" stroke-width="1.1" stroke-linejoin="round"/>
<line x1="470.6" y1="249.8" x2="474.9" y2="248.1" stroke="#3d352a" stroke-width="1.2"/>
<line x1="487.7" y1="243.1" x2="491.9" y2="241.5" stroke="#3d352a" stroke-width="1.2"/>
<line x1="504.7" y1="236.4" x2="508.9" y2="234.8" stroke="#3d352a" stroke-width="1.2"/>
<polygon points="539.6,267.2 599.2,243.9 598.1,290.7 538,315.9" fill="url(#g18)" stroke="#1b170f" stroke-width="1.0" stroke-linejoin="round"/>
<polygon points="518.6,264.2 529.1,265.7 588.6,242.5 578.1,241" fill="#cdb58a" stroke="#1b170f" stroke-width="1.1" stroke-linejoin="round"/>
<polygon points="529.1,265.7 539.6,267.2 599.2,243.9 588.6,242.5" fill="#cdb58a" stroke="#1b170f" stroke-width="1.1" stroke-linejoin="round"/>
<polygon points="607.6,276.8 667.5,253.6 666.3,300.4 605.9,325.5" fill="url(#g19)" stroke="#1b170f" stroke-width="1.0" stroke-linejoin="round"/>
<polygon points="598.3,275.5 607.6,276.8 667.5,253.6 658.2,252.3" fill="#cdb58a" stroke="#1b170f" stroke-width="1.1" stroke-linejoin="round"/>
</g>
<polygon points="441.6,221.7 735,263.1 741.3,260.7 447.7,219.3" fill="#a5946f" stroke="#1b170f" stroke-width="1.0" stroke-linejoin="round"/>
<polygon points="377.3,247.2 668.9,288.6 674.7,286.4 382.9,245" fill="#a5946f" stroke="#1b170f" stroke-width="1.0" stroke-linejoin="round"/>
<polygon points="382.9,245 394,246.5 452.8,223.3 441.6,221.7" fill="#cdb58a" stroke="#1b170f" stroke-width="1.0" stroke-linejoin="round"/>
<polygon points="382.9,245 386.1,245.4 444.8,222.2 441.6,221.7" fill="#857759"/>
<polygon points="663.6,284.8 674.7,286.4 735,263.1 723.9,261.5" fill="#cdb58a" stroke="#1b170f" stroke-width="1.0" stroke-linejoin="round"/>
<polygon points="450.4,254.4 454.4,255 515.1,231.4 511,230.8" fill="#a5946f"/>
<line x1="454.4" y1="255.3" x2="515.1" y2="231.5" stroke="#1b170f" stroke-width="0.9"/>
<polygon points="446,252.2 450.4,252.8 511,229.8 506.6,229.2" fill="#93845f" stroke="#1b170f" stroke-width="0.9" stroke-linejoin="round"/>
<polygon points="446,252.2 450.4,252.8 450.4,256.4 446,255.8" fill="#b3a27c" stroke="#1b170f" stroke-width="0.8" stroke-linejoin="round"/>
<polygon points="598.9,273.7 606,275.1 671.6,249.8 663.7,248.7" fill="#7d725d" stroke="#1b170f" stroke-width="0.8" stroke-linejoin="round"/>
<line x1="602.7" y1="272.6" x2="610.5" y2="272.8" stroke="#1f1a12" stroke-width="0.65"/>
<line x1="605" y1="271.7" x2="612.8" y2="271.9" stroke="#1f1a12" stroke-width="0.65"/>
<line x1="607.3" y1="270.8" x2="615.2" y2="271" stroke="#1f1a12" stroke-width="0.65"/>
<line x1="609.6" y1="269.9" x2="617.5" y2="270.1" stroke="#1f1a12" stroke-width="0.65"/>
<line x1="612" y1="269" x2="619.8" y2="269.2" stroke="#1f1a12" stroke-width="0.65"/>
<line x1="614.3" y1="268.1" x2="622.1" y2="268.3" stroke="#1f1a12" stroke-width="0.65"/>
<line x1="616.6" y1="267.2" x2="624.5" y2="267.4" stroke="#1f1a12" stroke-width="0.65"/>
<line x1="618.9" y1="266.3" x2="626.8" y2="266.5" stroke="#1f1a12" stroke-width="0.65"/>
<line x1="621.3" y1="265.4" x2="629.1" y2="265.6" stroke="#1f1a12" stroke-width="0.65"/>
<line x1="623.6" y1="264.5" x2="631.5" y2="264.7" stroke="#1f1a12" stroke-width="0.65"/>
<line x1="625.9" y1="263.6" x2="633.8" y2="263.8" stroke="#1f1a12" stroke-width="0.65"/>
<line x1="628.2" y1="262.7" x2="636.1" y2="262.9" stroke="#1f1a12" stroke-width="0.65"/>
<line x1="630.6" y1="261.8" x2="638.4" y2="262" stroke="#1f1a12" stroke-width="0.65"/>
<line x1="632.9" y1="260.9" x2="640.8" y2="261.1" stroke="#1f1a12" stroke-width="0.65"/>
<line x1="635.2" y1="260" x2="643.1" y2="260.2" stroke="#1f1a12" stroke-width="0.65"/>
<line x1="637.5" y1="259.1" x2="645.4" y2="259.3" stroke="#1f1a12" stroke-width="0.65"/>
<line x1="639.9" y1="258.2" x2="647.7" y2="258.4" stroke="#1f1a12" stroke-width="0.65"/>
<line x1="642.2" y1="257.3" x2="650.1" y2="257.5" stroke="#1f1a12" stroke-width="0.65"/>
<line x1="644.5" y1="256.4" x2="652.4" y2="256.6" stroke="#1f1a12" stroke-width="0.65"/>
<line x1="646.8" y1="255.5" x2="654.7" y2="255.7" stroke="#1f1a12" stroke-width="0.65"/>
<line x1="649.2" y1="254.6" x2="657.1" y2="254.8" stroke="#1f1a12" stroke-width="0.65"/>
<line x1="651.5" y1="253.7" x2="659.4" y2="253.9" stroke="#1f1a12" stroke-width="0.65"/>
<line x1="653.8" y1="252.8" x2="661.7" y2="253" stroke="#1f1a12" stroke-width="0.65"/>
<line x1="656.2" y1="251.9" x2="664" y2="252.1" stroke="#1f1a12" stroke-width="0.65"/>
<line x1="658.5" y1="251" x2="666.4" y2="251.2" stroke="#1f1a12" stroke-width="0.65"/>
<line x1="660.8" y1="250.1" x2="668.7" y2="250.3" stroke="#1f1a12" stroke-width="0.65"/>
<polygon points="606,275.1 671.6,249.8 671.3,260.8 623.9,279.1 606.6,276.7" fill="url(#g20)" stroke="#1b170f" stroke-width="0.9" stroke-linejoin="round"/>
<ellipse cx="617.1" cy="274.7" rx="1.25" ry="1.9" fill="#2b251b"/>
<ellipse cx="630.8" cy="270.6" rx="1.25" ry="1.9" fill="#2b251b"/>
<ellipse cx="645.2" cy="265" rx="1.25" ry="1.9" fill="#2b251b"/>
<ellipse cx="659.6" cy="259.5" rx="1.25" ry="1.9" fill="#2b251b"/>
<ellipse cx="669.7" cy="255.6" rx="1.25" ry="1.9" fill="#2b251b"/>
<polygon points="595.6,273.1 599,273.7 598.9,276.2 595.6,275.5" fill="#b9a780" stroke="#1b170f" stroke-width="0.6" stroke-linejoin="round"/>
<polygon points="599.2,273.8 606,275.1 606,277.7 599.1,276.4" fill="#9c8d6d" stroke="#1b170f" stroke-width="0.6" stroke-linejoin="round"/>
<polygon points="377.3,247.2 668.9,288.6 667,337.5 376,296" fill="#6a5e49" stroke="#1b170f" stroke-width="1.0" stroke-linejoin="round"/>
<line x1="385.7" y1="263.1" x2="537.2" y2="285.4" stroke="#7d6a45" stroke-width="1.0" opacity="0.2"/>
<line x1="400" y1="273.5" x2="566" y2="297.8" stroke="#7d6a45" stroke-width="1.0" opacity="0.2"/>
<line x1="414.4" y1="282.8" x2="594.9" y2="309.3" stroke="#7d6a45" stroke-width="1.0" opacity="0.2"/>
<line x1="428.7" y1="293.7" x2="623.7" y2="322.2" stroke="#7d6a45" stroke-width="1.0" opacity="0.2"/>
<polygon points="668.9,288.6 673.1,287 671.2,335.7 667,337.5" fill="#a3926f" stroke="#1b170f" stroke-width="0.9" stroke-linejoin="round"/>
<polygon points="673.1,287 735.9,262.8 734.5,309.6 671.2,335.7" fill="url(#g21)" stroke="#1b170f" stroke-width="0.9" stroke-linejoin="round"/>
<line x1="679" y1="286.2" x2="677.3" y2="331.8" stroke="#c2ad82" stroke-width="1.1" opacity="0.16"/>
<line x1="684.8" y1="283.9" x2="683.1" y2="329.4" stroke="#7d6f54" stroke-width="1.1" opacity="0.16"/>
<line x1="692.7" y1="280.8" x2="691.1" y2="326.1" stroke="#c2ad82" stroke-width="1.1" opacity="0.16"/>
<line x1="702.9" y1="276.9" x2="701.4" y2="321.9" stroke="#7d6f54" stroke-width="1.1" opacity="0.16"/>
<line x1="710.8" y1="273.8" x2="709.4" y2="318.6" stroke="#c2ad82" stroke-width="1.1" opacity="0.16"/>
<line x1="719.5" y1="270.5" x2="718.1" y2="314.9" stroke="#7d6f54" stroke-width="1.1" opacity="0.16"/>
<line x1="728.2" y1="267.1" x2="726.9" y2="311.3" stroke="#c2ad82" stroke-width="1.1" opacity="0.16"/>
<polygon points="735.9,262.8 741.3,260.7 740,307.3 734.5,309.6" fill="#978766" stroke="#1b170f" stroke-width="0.9" stroke-linejoin="round"/>
<polygon points="377.3,247.2 447.7,219.3 741.3,260.7 740,307.3 667,337.5 376,296" fill="none" stroke="#1b170f" stroke-width="1.35" stroke-linejoin="round"/>
<line x1="668.9" y1="288.6" x2="667" y2="337.5" stroke="#1b170f" stroke-width="1.2"/>
<circle cx="381" cy="255.3" r="1.75" fill="#241e14" stroke="#17130c" stroke-width="0.7"/>
<circle cx="381.2" cy="255.2" r="0.45" fill="#5a503e"/>
<circle cx="380.1" cy="290.4" r="1.75" fill="#241e14" stroke="#17130c" stroke-width="0.7"/>
<circle cx="380.2" cy="290.3" r="0.45" fill="#5a503e"/>
<circle cx="449.5" cy="265" r="1.75" fill="#241e14" stroke="#17130c" stroke-width="0.7"/>
<circle cx="449.7" cy="264.9" r="0.45" fill="#5a503e"/>
<circle cx="448.5" cy="300.1" r="1.75" fill="#241e14" stroke="#17130c" stroke-width="0.7"/>
<circle cx="448.6" cy="300" r="0.45" fill="#5a503e"/>
<circle cx="517.8" cy="274.7" r="1.75" fill="#241e14" stroke="#17130c" stroke-width="0.7"/>
<circle cx="517.9" cy="274.6" r="0.45" fill="#5a503e"/>
<circle cx="516.6" cy="309.8" r="1.75" fill="#241e14" stroke="#17130c" stroke-width="0.7"/>
<circle cx="516.8" cy="309.7" r="0.45" fill="#5a503e"/>
<circle cx="527.2" cy="276" r="1.75" fill="#241e14" stroke="#17130c" stroke-width="0.7"/>
<circle cx="527.4" cy="275.9" r="0.45" fill="#5a503e"/>
<circle cx="526.1" cy="311.2" r="1.75" fill="#241e14" stroke="#17130c" stroke-width="0.7"/>
<circle cx="526.2" cy="311.1" r="0.45" fill="#5a503e"/>
<circle cx="595.4" cy="285.7" r="1.75" fill="#241e14" stroke="#17130c" stroke-width="0.7"/>
<circle cx="595.6" cy="285.6" r="0.45" fill="#5a503e"/>
<circle cx="594.2" cy="320.9" r="1.75" fill="#241e14" stroke="#17130c" stroke-width="0.7"/>
<circle cx="594.3" cy="320.8" r="0.45" fill="#5a503e"/>
<circle cx="663.4" cy="295.3" r="1.75" fill="#241e14" stroke="#17130c" stroke-width="0.7"/>
<circle cx="663.5" cy="295.2" r="0.45" fill="#5a503e"/>
<circle cx="662" cy="330.6" r="1.75" fill="#241e14" stroke="#17130c" stroke-width="0.7"/>
<circle cx="662.2" cy="330.5" r="0.45" fill="#5a503e"/>
<path d="M695.8 293.1 L716.4 284.9 Q718.1 284.2 718 286 L717.9 292.8 Q717.9 294.6 716.2 295.3 L695.6 303.5 Q693.9 304.2 694 302.4 L694.1 295.6 Q694.1 293.8 695.8 293.1 Z" fill="#786c55" stroke="#1b170f" stroke-width="1.25" stroke-linejoin="round"/>
<polygon points="695.2,293.6 717,285 717.7,287.4 694.6,296.6" fill="#6a5f4a"/>
<line x1="698.4" y1="292.4" x2="698.6" y2="294.9" stroke="#2a241a" stroke-width="0.7"/>
<line x1="700.8" y1="291.4" x2="700.9" y2="293.9" stroke="#2a241a" stroke-width="0.7"/>
<line x1="703.1" y1="290.5" x2="703.3" y2="293" stroke="#2a241a" stroke-width="0.7"/>
<line x1="705.5" y1="289.5" x2="705.7" y2="292" stroke="#2a241a" stroke-width="0.7"/>
<line x1="707.9" y1="288.6" x2="708" y2="291.1" stroke="#2a241a" stroke-width="0.7"/>
<line x1="710.2" y1="287.6" x2="710.4" y2="290.2" stroke="#2a241a" stroke-width="0.7"/>
<line x1="712.6" y1="286.7" x2="712.8" y2="289.2" stroke="#2a241a" stroke-width="0.7"/>
<line x1="715" y1="285.8" x2="715.1" y2="288.3" stroke="#2a241a" stroke-width="0.7"/>
<line x1="694.4" y1="296.6" x2="717.7" y2="287.3" stroke="#1b170f" stroke-width="0.9"/>
<polygon points="694.5,296.6 698.3,295.1 698.2,302.1 694.4,303.4" fill="#5f5543"/>
<line x1="696.5" y1="296.2" x2="696.3" y2="302.4" stroke="#3a3327" stroke-width="0.6"/>
<line x1="698.3" y1="295.1" x2="698.2" y2="302.3" stroke="#1b170f" stroke-width="0.9"/>
<polygon points="698.7,295.3 717.5,287.8 717.3,293.2 698.6,300.7" fill="#9a8d71"/>
<line x1="698.2" y1="301.1" x2="717.4" y2="293.4" stroke="#2f291f" stroke-width="0.8"/>
<ellipse cx="702.5" cy="296.5" rx="1.05" ry="1.5" fill="#4b4234" stroke="#1b170f" stroke-width="0.6"/>
<ellipse cx="711.9" cy="292.7" rx="1.05" ry="1.5" fill="#4b4234" stroke="#1b170f" stroke-width="0.6"/>
<line x1="714.3" y1="288.9" x2="714.2" y2="294.6" stroke="#3a3327" stroke-width="0.6"/>
</g>
<g id="b3">
<g clip-path="url(#c_b3)">
<polygon points="449.9,339.7 720.6,378 718.9,439.7 448.5,401.1" fill="#675b46"/>
<polygon points="391.2,363.3 449.9,339.7 448.5,401.1 389.1,425.3" fill="url(#g22)" stroke="#1b170f" stroke-width="1.0" stroke-linejoin="round"/>
<polygon points="459.5,372.9 518.4,349.4 516.9,410.9 457.2,435" fill="url(#g23)" stroke="#1b170f" stroke-width="1.0" stroke-linejoin="round"/>
<polygon points="452.5,372 459.5,372.9 518.4,349.4 511.4,348.4" fill="#c9b186" stroke="#1b170f" stroke-width="1.1" stroke-linejoin="round"/>
<line x1="467.8" y1="366.5" x2="472" y2="364.8" stroke="#3d352a" stroke-width="1.2"/>
<line x1="484.7" y1="359.7" x2="489" y2="358" stroke="#3d352a" stroke-width="1.2"/>
<line x1="501.7" y1="352.9" x2="506" y2="351.2" stroke="#3d352a" stroke-width="1.2"/>
<polygon points="536.8,383.9 596.1,360.4 594.5,421.9 534.4,446" fill="url(#g24)" stroke="#1b170f" stroke-width="1.0" stroke-linejoin="round"/>
<polygon points="515.8,380.9 526.3,382.4 585.5,358.9 575,357.4" fill="#cdb58a" stroke="#1b170f" stroke-width="1.1" stroke-linejoin="round"/>
<polygon points="526.3,382.4 536.8,383.9 596.1,360.4 585.5,358.9" fill="#cdb58a" stroke="#1b170f" stroke-width="1.1" stroke-linejoin="round"/>
<polygon points="604.8,393.5 664.4,370.1 662.7,431.7 602.3,455.7" fill="url(#g25)" stroke="#1b170f" stroke-width="1.0" stroke-linejoin="round"/>
<polygon points="595.4,392.2 604.8,393.5 664.4,370.1 655,368.8" fill="#cdb58a" stroke="#1b170f" stroke-width="1.1" stroke-linejoin="round"/>
</g>
<polygon points="438.7,338.1 731.8,379.6 738,377.2 444.8,335.7" fill="#a5946f" stroke="#1b170f" stroke-width="1.0" stroke-linejoin="round"/>
<polygon points="374.5,364 666.1,405.2 671.9,403 380.1,361.7" fill="#a5946f" stroke="#1b170f" stroke-width="1.0" stroke-linejoin="round"/>
<polygon points="380.1,361.7 391.2,363.3 449.9,339.7 438.7,338.1" fill="#cdb58a" stroke="#1b170f" stroke-width="1.0" stroke-linejoin="round"/>
<polygon points="380.1,361.7 383.3,362.2 441.9,338.6 438.7,338.1" fill="#857759"/>
<polygon points="660.8,401.4 671.9,403 731.8,379.6 720.6,378" fill="#cdb58a" stroke="#1b170f" stroke-width="1.0" stroke-linejoin="round"/>
<polygon points="447.5,371.1 451.6,371.7 512.1,347.9 508,347.3" fill="#a5946f"/>
<line x1="451.6" y1="372" x2="512.1" y2="348" stroke="#1b170f" stroke-width="0.9"/>
<polygon points="443.2,368.9 447.5,369.5 508,346.3 503.6,345.6" fill="#93845f" stroke="#1b170f" stroke-width="0.9" stroke-linejoin="round"/>
<polygon points="443.2,368.9 447.5,369.5 447.5,373.1 443.2,372.5" fill="#b3a27c" stroke="#1b170f" stroke-width="0.8" stroke-linejoin="round"/>
<polygon points="596.1,390.4 603.2,391.8 668.4,366.3 660.5,365.2" fill="#7d725d" stroke="#1b170f" stroke-width="0.8" stroke-linejoin="round"/>
<line x1="599.8" y1="389.2" x2="607.7" y2="389.4" stroke="#1f1a12" stroke-width="0.65"/>
<line x1="602.1" y1="388.3" x2="610" y2="388.5" stroke="#1f1a12" stroke-width="0.65"/>
<line x1="604.5" y1="387.4" x2="612.3" y2="387.6" stroke="#1f1a12" stroke-width="0.65"/>
<line x1="606.8" y1="386.5" x2="614.6" y2="386.7" stroke="#1f1a12" stroke-width="0.65"/>
<line x1="609.1" y1="385.6" x2="616.9" y2="385.8" stroke="#1f1a12" stroke-width="0.65"/>
<line x1="611.4" y1="384.7" x2="619.2" y2="384.9" stroke="#1f1a12" stroke-width="0.65"/>
<line x1="613.7" y1="383.8" x2="621.6" y2="384" stroke="#1f1a12" stroke-width="0.65"/>
<line x1="616" y1="382.9" x2="623.9" y2="383.1" stroke="#1f1a12" stroke-width="0.65"/>
<line x1="618.3" y1="382" x2="626.2" y2="382.2" stroke="#1f1a12" stroke-width="0.65"/>
<line x1="620.6" y1="381.1" x2="628.5" y2="381.3" stroke="#1f1a12" stroke-width="0.65"/>
<line x1="623" y1="380.2" x2="630.8" y2="380.4" stroke="#1f1a12" stroke-width="0.65"/>
<line x1="625.3" y1="379.3" x2="633.1" y2="379.5" stroke="#1f1a12" stroke-width="0.65"/>
<line x1="627.6" y1="378.4" x2="635.4" y2="378.6" stroke="#1f1a12" stroke-width="0.65"/>
<line x1="629.9" y1="377.5" x2="637.8" y2="377.7" stroke="#1f1a12" stroke-width="0.65"/>
<line x1="632.2" y1="376.6" x2="640.1" y2="376.8" stroke="#1f1a12" stroke-width="0.65"/>
<line x1="634.5" y1="375.7" x2="642.4" y2="375.9" stroke="#1f1a12" stroke-width="0.65"/>
<line x1="636.8" y1="374.8" x2="644.7" y2="375" stroke="#1f1a12" stroke-width="0.65"/>
<line x1="639.1" y1="373.9" x2="647" y2="374.1" stroke="#1f1a12" stroke-width="0.65"/>
<line x1="641.5" y1="373" x2="649.3" y2="373.2" stroke="#1f1a12" stroke-width="0.65"/>
<line x1="643.8" y1="372.1" x2="651.6" y2="372.3" stroke="#1f1a12" stroke-width="0.65"/>
<line x1="646.1" y1="371.1" x2="654" y2="371.3" stroke="#1f1a12" stroke-width="0.65"/>
<line x1="648.4" y1="370.2" x2="656.3" y2="370.4" stroke="#1f1a12" stroke-width="0.65"/>
<line x1="650.7" y1="369.3" x2="658.6" y2="369.5" stroke="#1f1a12" stroke-width="0.65"/>
<line x1="653" y1="368.4" x2="660.9" y2="368.6" stroke="#1f1a12" stroke-width="0.65"/>
<line x1="655.3" y1="367.5" x2="663.2" y2="367.7" stroke="#1f1a12" stroke-width="0.65"/>
<line x1="657.7" y1="366.6" x2="665.5" y2="366.8" stroke="#1f1a12" stroke-width="0.65"/>
<polygon points="603.2,391.8 668.4,366.3 668.1,377.3 621,395.7 603.8,393.3" fill="url(#g26)" stroke="#1b170f" stroke-width="0.9" stroke-linejoin="round"/>
<ellipse cx="614.3" cy="391.3" rx="1.25" ry="1.9" fill="#2b251b"/>
<ellipse cx="627.8" cy="387.2" rx="1.25" ry="1.9" fill="#2b251b"/>
<ellipse cx="642.2" cy="381.6" rx="1.25" ry="1.9" fill="#2b251b"/>
<ellipse cx="656.5" cy="376" rx="1.25" ry="1.9" fill="#2b251b"/>
<ellipse cx="666.5" cy="372.1" rx="1.25" ry="1.9" fill="#2b251b"/>
<polygon points="592.8,389.8 596.2,390.3 596.1,392.8 592.8,392.2" fill="#b9a780" stroke="#1b170f" stroke-width="0.6" stroke-linejoin="round"/>
<polygon points="596.4,390.4 603.2,391.8 603.2,394.4 596.3,393" fill="#9c8d6d" stroke="#1b170f" stroke-width="0.6" stroke-linejoin="round"/>
<polygon points="374.5,364 666.1,405.2 663.5,467.5 372.3,426" fill="#6a5e49" stroke="#1b170f" stroke-width="1.0" stroke-linejoin="round"/>
<line x1="382.6" y1="383.8" x2="534.1" y2="406.2" stroke="#7d6a45" stroke-width="1.0" opacity="0.2"/>
<line x1="396.8" y1="396.4" x2="562.8" y2="420.9" stroke="#7d6a45" stroke-width="1.0" opacity="0.2"/>
<line x1="411" y1="407.8" x2="591.6" y2="434.4" stroke="#7d6a45" stroke-width="1.0" opacity="0.2"/>
<line x1="425.2" y1="421.1" x2="620.3" y2="449.8" stroke="#7d6a45" stroke-width="1.0" opacity="0.2"/>
<polygon points="666.1,405.2 670.3,403.6 667.7,465.8 663.5,467.5" fill="#a3926f" stroke="#1b170f" stroke-width="0.9" stroke-linejoin="round"/>
<polygon points="670.3,403.6 732.6,379.3 730.8,441 667.7,465.8" fill="url(#g27)" stroke="#1b170f" stroke-width="0.9" stroke-linejoin="round"/>
<line x1="676.1" y1="403.1" x2="673.8" y2="461.6" stroke="#c2ad82" stroke-width="1.1" opacity="0.16"/>
<line x1="681.8" y1="400.9" x2="679.6" y2="459.3" stroke="#7d6f54" stroke-width="1.1" opacity="0.16"/>
<line x1="689.8" y1="397.8" x2="687.6" y2="456.2" stroke="#c2ad82" stroke-width="1.1" opacity="0.16"/>
<line x1="699.8" y1="393.9" x2="697.8" y2="452.2" stroke="#7d6f54" stroke-width="1.1" opacity="0.16"/>
<line x1="707.7" y1="390.8" x2="705.8" y2="449" stroke="#c2ad82" stroke-width="1.1" opacity="0.16"/>
<line x1="716.4" y1="387.5" x2="714.5" y2="445.6" stroke="#7d6f54" stroke-width="1.1" opacity="0.16"/>
<line x1="725" y1="384.1" x2="723.3" y2="442.1" stroke="#c2ad82" stroke-width="1.1" opacity="0.16"/>
<polygon points="732.6,379.3 738,377.2 736.3,438.8 730.8,441" fill="#978766" stroke="#1b170f" stroke-width="0.9" stroke-linejoin="round"/>
<polygon points="374.5,364 444.8,335.7 738,377.2 736.3,438.8 663.5,467.5 372.3,426" fill="none" stroke="#1b170f" stroke-width="1.35" stroke-linejoin="round"/>
<line x1="666.1" y1="405.2" x2="663.5" y2="467.5" stroke="#1b170f" stroke-width="1.2"/>
<circle cx="378.2" cy="372.1" r="1.75" fill="#241e14" stroke="#17130c" stroke-width="0.7"/>
<circle cx="378.3" cy="372" r="0.45" fill="#5a503e"/>
<circle cx="376.5" cy="420.4" r="1.75" fill="#241e14" stroke="#17130c" stroke-width="0.7"/>
<circle cx="376.6" cy="420.3" r="0.45" fill="#5a503e"/>
<circle cx="446.7" cy="381.7" r="1.75" fill="#241e14" stroke="#17130c" stroke-width="0.7"/>
<circle cx="446.8" cy="381.6" r="0.45" fill="#5a503e"/>
<circle cx="444.9" cy="430.1" r="1.75" fill="#241e14" stroke="#17130c" stroke-width="0.7"/>
<circle cx="445" cy="430" r="0.45" fill="#5a503e"/>
<circle cx="514.9" cy="391.4" r="1.75" fill="#241e14" stroke="#17130c" stroke-width="0.7"/>
<circle cx="515.1" cy="391.3" r="0.45" fill="#5a503e"/>
<circle cx="513" cy="439.8" r="1.75" fill="#241e14" stroke="#17130c" stroke-width="0.7"/>
<circle cx="513.2" cy="439.7" r="0.45" fill="#5a503e"/>
<circle cx="524.4" cy="392.7" r="1.75" fill="#241e14" stroke="#17130c" stroke-width="0.7"/>
<circle cx="524.5" cy="392.6" r="0.45" fill="#5a503e"/>
<circle cx="522.5" cy="441.2" r="1.75" fill="#241e14" stroke="#17130c" stroke-width="0.7"/>
<circle cx="522.7" cy="441.1" r="0.45" fill="#5a503e"/>
<circle cx="592.6" cy="402.4" r="1.75" fill="#241e14" stroke="#17130c" stroke-width="0.7"/>
<circle cx="592.8" cy="402.3" r="0.45" fill="#5a503e"/>
<circle cx="590.7" cy="450.9" r="1.75" fill="#241e14" stroke="#17130c" stroke-width="0.7"/>
<circle cx="590.8" cy="450.8" r="0.45" fill="#5a503e"/>
<circle cx="660.5" cy="412" r="1.75" fill="#241e14" stroke="#17130c" stroke-width="0.7"/>
<circle cx="660.7" cy="411.9" r="0.45" fill="#5a503e"/>
<circle cx="658.5" cy="460.6" r="1.75" fill="#241e14" stroke="#17130c" stroke-width="0.7"/>
<circle cx="658.7" cy="460.5" r="0.45" fill="#5a503e"/>
<path d="M692.6 416.2 L713.3 408.2 Q715 407.5 714.9 409.3 L714.8 416.1 Q714.8 417.9 713.1 418.6 L692.4 426.6 Q690.7 427.3 690.8 425.5 L690.9 418.7 Q690.9 416.9 692.6 416.2 Z" fill="#786c55" stroke="#1b170f" stroke-width="1.25" stroke-linejoin="round"/>
<polygon points="692.1,416.8 713.8,408.2 714.5,410.6 691.4,419.7" fill="#6a5f4a"/>
<line x1="695.2" y1="415.5" x2="695.4" y2="418" stroke="#2a241a" stroke-width="0.7"/>
<line x1="697.6" y1="414.6" x2="697.8" y2="417.1" stroke="#2a241a" stroke-width="0.7"/>
<line x1="700" y1="413.7" x2="700.1" y2="416.2" stroke="#2a241a" stroke-width="0.7"/>
<line x1="702.3" y1="412.7" x2="702.5" y2="415.2" stroke="#2a241a" stroke-width="0.7"/>
<line x1="704.7" y1="411.8" x2="704.9" y2="414.3" stroke="#2a241a" stroke-width="0.7"/>
<line x1="707.1" y1="410.9" x2="707.3" y2="413.4" stroke="#2a241a" stroke-width="0.7"/>
<line x1="709.5" y1="409.9" x2="709.6" y2="412.5" stroke="#2a241a" stroke-width="0.7"/>
<line x1="711.8" y1="409" x2="712" y2="411.5" stroke="#2a241a" stroke-width="0.7"/>
<line x1="691.3" y1="419.8" x2="714.6" y2="410.6" stroke="#1b170f" stroke-width="0.9"/>
<polygon points="691.3,419.7 695.2,418.2 695,425.2 691.2,426.5" fill="#5f5543"/>
<line x1="693.3" y1="419.4" x2="693.2" y2="425.6" stroke="#3a3327" stroke-width="0.6"/>
<line x1="695.2" y1="418.2" x2="695" y2="425.4" stroke="#1b170f" stroke-width="0.9"/>
<polygon points="695.5,418.5 714.3,411.1 714.2,416.5 695.4,423.9" fill="#9a8d71"/>
<line x1="695" y1="424.2" x2="714.3" y2="416.7" stroke="#2f291f" stroke-width="0.8"/>
<ellipse cx="699.3" cy="419.7" rx="1.05" ry="1.5" fill="#4b4234" stroke="#1b170f" stroke-width="0.6"/>
<ellipse cx="708.8" cy="416" rx="1.05" ry="1.5" fill="#4b4234" stroke="#1b170f" stroke-width="0.6"/>
<line x1="711.2" y1="412.2" x2="711.1" y2="417.9" stroke="#3a3327" stroke-width="0.6"/>
</g>
<g id="b4">
<g clip-path="url(#c_b4)">
<polygon points="446.3,470 717.1,508.3 715,570.1 443.6,532.1" fill="#675b46"/>
<polygon points="387.2,493.6 446.3,470 443.6,532.1 385.5,556" fill="url(#g28)" stroke="#1b170f" stroke-width="1.0" stroke-linejoin="round"/>
<polygon points="455.5,503.2 514.9,479.7 512.3,541.7 453.8,565.6" fill="url(#g29)" stroke="#1b170f" stroke-width="1.0" stroke-linejoin="round"/>
<polygon points="448.5,502.2 455.5,503.2 514.9,479.7 507.9,478.7" fill="#c9b186" stroke="#1b170f" stroke-width="1.1" stroke-linejoin="round"/>
<line x1="463.9" y1="496.8" x2="468.2" y2="495.1" stroke="#3d352a" stroke-width="1.2"/>
<line x1="481" y1="490" x2="485.3" y2="488.3" stroke="#3d352a" stroke-width="1.2"/>
<line x1="498.1" y1="483.2" x2="502.4" y2="481.5" stroke="#3d352a" stroke-width="1.2"/>
<polygon points="532.7,514.1 592.5,490.7 590.2,552.6 531.3,576.4" fill="url(#g30)" stroke="#1b170f" stroke-width="1.0" stroke-linejoin="round"/>
<polygon points="511.7,511.2 522.2,512.6 582,489.2 571.4,487.7" fill="#cdb58a" stroke="#1b170f" stroke-width="1.1" stroke-linejoin="round"/>
<polygon points="522.2,512.6 532.7,514.1 592.5,490.7 582,489.2" fill="#cdb58a" stroke="#1b170f" stroke-width="1.1" stroke-linejoin="round"/>
<polygon points="600.7,523.7 660.8,500.4 658.6,562.2 599.3,585.9" fill="url(#g31)" stroke="#1b170f" stroke-width="1.0" stroke-linejoin="round"/>
<polygon points="591.3,522.4 600.7,523.7 660.8,500.4 651.4,499" fill="#cdb58a" stroke="#1b170f" stroke-width="1.1" stroke-linejoin="round"/>
</g>
<polygon points="435.2,468.4 728.2,509.9 734.5,507.5 441.3,466" fill="#a5946f" stroke="#1b170f" stroke-width="1.0" stroke-linejoin="round"/>
<polygon points="370.5,494.3 661.9,535.4 667.7,533.2 376.2,492" fill="#a5946f" stroke="#1b170f" stroke-width="1.0" stroke-linejoin="round"/>
<polygon points="376.2,492 387.2,493.6 446.3,470 435.2,468.4" fill="#cdb58a" stroke="#1b170f" stroke-width="1.0" stroke-linejoin="round"/>
<polygon points="376.2,492 379.4,492.5 438.4,468.9 435.2,468.4" fill="#857759"/>
<polygon points="656.6,531.6 667.7,533.2 728.2,509.9 717.1,508.3" fill="#cdb58a" stroke="#1b170f" stroke-width="1.0" stroke-linejoin="round"/>
<polygon points="443.5,501.4 447.6,502 508.6,478.1 504.5,477.6" fill="#a5946f"/>
<line x1="447.6" y1="502.3" x2="508.6" y2="478.2" stroke="#1b170f" stroke-width="0.9"/>
<polygon points="439.2,499.2 443.5,499.8 504.5,476.5 500.1,475.9" fill="#93845f" stroke="#1b170f" stroke-width="0.9" stroke-linejoin="round"/>
<polygon points="439.2,499.2 443.5,499.8 443.5,503.4 439.2,502.8" fill="#b3a27c" stroke="#1b170f" stroke-width="0.8" stroke-linejoin="round"/>
<polygon points="591.9,520.6 599.1,522 664.9,496.6 657,495.5" fill="#7d725d" stroke="#1b170f" stroke-width="0.8" stroke-linejoin="round"/>
<line x1="595.7" y1="519.5" x2="603.6" y2="519.7" stroke="#1f1a12" stroke-width="0.65"/>
<line x1="598.1" y1="518.6" x2="605.9" y2="518.8" stroke="#1f1a12" stroke-width="0.65"/>
<line x1="600.4" y1="517.7" x2="608.2" y2="517.9" stroke="#1f1a12" stroke-width="0.65"/>
<line x1="602.7" y1="516.8" x2="610.6" y2="517" stroke="#1f1a12" stroke-width="0.65"/>
<line x1="605.1" y1="515.9" x2="612.9" y2="516.1" stroke="#1f1a12" stroke-width="0.65"/>
<line x1="607.4" y1="515" x2="615.2" y2="515.2" stroke="#1f1a12" stroke-width="0.65"/>
<line x1="609.7" y1="514.1" x2="617.6" y2="514.3" stroke="#1f1a12" stroke-width="0.65"/>
<line x1="612.1" y1="513.2" x2="619.9" y2="513.4" stroke="#1f1a12" stroke-width="0.65"/>
<line x1="614.4" y1="512.3" x2="622.3" y2="512.4" stroke="#1f1a12" stroke-width="0.65"/>
<line x1="616.7" y1="511.4" x2="624.6" y2="511.5" stroke="#1f1a12" stroke-width="0.65"/>
<line x1="619.1" y1="510.4" x2="626.9" y2="510.6" stroke="#1f1a12" stroke-width="0.65"/>
<line x1="621.4" y1="509.5" x2="629.3" y2="509.7" stroke="#1f1a12" stroke-width="0.65"/>
<line x1="623.7" y1="508.6" x2="631.6" y2="508.8" stroke="#1f1a12" stroke-width="0.65"/>
<line x1="626.1" y1="507.7" x2="633.9" y2="507.9" stroke="#1f1a12" stroke-width="0.65"/>
<line x1="628.4" y1="506.8" x2="636.3" y2="507" stroke="#1f1a12" stroke-width="0.65"/>
<line x1="630.7" y1="505.9" x2="638.6" y2="506.1" stroke="#1f1a12" stroke-width="0.65"/>
<line x1="633.1" y1="505" x2="640.9" y2="505.2" stroke="#1f1a12" stroke-width="0.65"/>
<line x1="635.4" y1="504.1" x2="643.3" y2="504.3" stroke="#1f1a12" stroke-width="0.65"/>
<line x1="637.7" y1="503.2" x2="645.6" y2="503.4" stroke="#1f1a12" stroke-width="0.65"/>
<line x1="640.1" y1="502.3" x2="647.9" y2="502.5" stroke="#1f1a12" stroke-width="0.65"/>
<line x1="642.4" y1="501.4" x2="650.3" y2="501.6" stroke="#1f1a12" stroke-width="0.65"/>
<line x1="644.7" y1="500.5" x2="652.6" y2="500.7" stroke="#1f1a12" stroke-width="0.65"/>
<line x1="647.1" y1="499.6" x2="655" y2="499.8" stroke="#1f1a12" stroke-width="0.65"/>
<line x1="649.4" y1="498.7" x2="657.3" y2="498.9" stroke="#1f1a12" stroke-width="0.65"/>
<line x1="651.7" y1="497.8" x2="659.6" y2="498" stroke="#1f1a12" stroke-width="0.65"/>
<line x1="654.1" y1="496.9" x2="662" y2="497.1" stroke="#1f1a12" stroke-width="0.65"/>
<polygon points="599.1,522 664.9,496.6 664.5,507.6 617,526 599.7,523.6" fill="url(#g32)" stroke="#1b170f" stroke-width="0.9" stroke-linejoin="round"/>
<ellipse cx="610.2" cy="521.5" rx="1.25" ry="1.9" fill="#2b251b"/>
<ellipse cx="623.9" cy="517.4" rx="1.25" ry="1.9" fill="#2b251b"/>
<ellipse cx="638.4" cy="511.8" rx="1.25" ry="1.9" fill="#2b251b"/>
<ellipse cx="652.8" cy="506.3" rx="1.25" ry="1.9" fill="#2b251b"/>
<ellipse cx="662.9" cy="502.4" rx="1.25" ry="1.9" fill="#2b251b"/>
<polygon points="588.7,520 592.1,520.6 592,523.1 588.7,522.4" fill="#b9a780" stroke="#1b170f" stroke-width="0.6" stroke-linejoin="round"/>
<polygon points="592.2,520.7 599.1,522 599,524.6 592.2,523.3" fill="#9c8d6d" stroke="#1b170f" stroke-width="0.6" stroke-linejoin="round"/>
<polygon points="370.5,494.3 661.9,535.4 660.8,597.6 368.8,556.8" fill="#6a5e49" stroke="#1b170f" stroke-width="1.0" stroke-linejoin="round"/>
<line x1="378.7" y1="514.3" x2="530.3" y2="536.5" stroke="#7d6a45" stroke-width="1.0" opacity="0.2"/>
<line x1="393" y1="527" x2="559.3" y2="551.2" stroke="#7d6a45" stroke-width="1.0" opacity="0.2"/>
<line x1="407.4" y1="538.4" x2="588.3" y2="564.7" stroke="#7d6a45" stroke-width="1.0" opacity="0.2"/>
<line x1="421.7" y1="551.7" x2="617.2" y2="580" stroke="#7d6a45" stroke-width="1.0" opacity="0.2"/>
<polygon points="661.9,535.4 666.1,533.8 664.9,596 660.8,597.6" fill="#a3926f" stroke="#1b170f" stroke-width="0.9" stroke-linejoin="round"/>
<polygon points="666.1,533.8 729.1,509.6 726.9,571.3 664.9,596" fill="url(#g33)" stroke="#1b170f" stroke-width="0.9" stroke-linejoin="round"/>
<line x1="672" y1="533.4" x2="670.8" y2="591.8" stroke="#c2ad82" stroke-width="1.1" opacity="0.16"/>
<line x1="677.8" y1="531.1" x2="676.6" y2="589.5" stroke="#7d6f54" stroke-width="1.1" opacity="0.16"/>
<line x1="685.8" y1="528.1" x2="684.4" y2="586.4" stroke="#c2ad82" stroke-width="1.1" opacity="0.16"/>
<line x1="696" y1="524.1" x2="694.5" y2="582.4" stroke="#7d6f54" stroke-width="1.1" opacity="0.16"/>
<line x1="704" y1="521.1" x2="702.3" y2="579.3" stroke="#c2ad82" stroke-width="1.1" opacity="0.16"/>
<line x1="712.7" y1="517.7" x2="710.9" y2="575.9" stroke="#7d6f54" stroke-width="1.1" opacity="0.16"/>
<line x1="721.4" y1="514.4" x2="719.5" y2="572.5" stroke="#c2ad82" stroke-width="1.1" opacity="0.16"/>
<polygon points="729.1,509.6 734.5,507.5 732.3,569.2 726.9,571.3" fill="#978766" stroke="#1b170f" stroke-width="0.9" stroke-linejoin="round"/>
<polygon points="370.5,494.3 441.3,466 734.5,507.5 732.3,569.2 660.8,597.6 368.8,556.8" fill="none" stroke="#1b170f" stroke-width="1.35" stroke-linejoin="round"/>
<line x1="661.9" y1="535.4" x2="660.8" y2="597.6" stroke="#1b170f" stroke-width="1.2"/>
<circle cx="374.2" cy="502.4" r="1.75" fill="#241e14" stroke="#17130c" stroke-width="0.7"/>
<circle cx="374.4" cy="502.3" r="0.45" fill="#5a503e"/>
<circle cx="372.9" cy="551.2" r="1.75" fill="#241e14" stroke="#17130c" stroke-width="0.7"/>
<circle cx="373.1" cy="551.1" r="0.45" fill="#5a503e"/>
<circle cx="442.7" cy="512" r="1.75" fill="#241e14" stroke="#17130c" stroke-width="0.7"/>
<circle cx="442.9" cy="511.9" r="0.45" fill="#5a503e"/>
<circle cx="441.5" cy="560.7" r="1.75" fill="#241e14" stroke="#17130c" stroke-width="0.7"/>
<circle cx="441.7" cy="560.6" r="0.45" fill="#5a503e"/>
<circle cx="510.9" cy="521.6" r="1.75" fill="#241e14" stroke="#17130c" stroke-width="0.7"/>
<circle cx="511.1" cy="521.5" r="0.45" fill="#5a503e"/>
<circle cx="509.8" cy="570.3" r="1.75" fill="#241e14" stroke="#17130c" stroke-width="0.7"/>
<circle cx="510" cy="570.2" r="0.45" fill="#5a503e"/>
<circle cx="520.4" cy="523" r="1.75" fill="#241e14" stroke="#17130c" stroke-width="0.7"/>
<circle cx="520.6" cy="522.9" r="0.45" fill="#5a503e"/>
<circle cx="519.3" cy="571.6" r="1.75" fill="#241e14" stroke="#17130c" stroke-width="0.7"/>
<circle cx="519.5" cy="571.5" r="0.45" fill="#5a503e"/>
<circle cx="588.6" cy="532.6" r="1.75" fill="#241e14" stroke="#17130c" stroke-width="0.7"/>
<circle cx="588.8" cy="532.5" r="0.45" fill="#5a503e"/>
<circle cx="587.6" cy="581.2" r="1.75" fill="#241e14" stroke="#17130c" stroke-width="0.7"/>
<circle cx="587.8" cy="581.1" r="0.45" fill="#5a503e"/>
<circle cx="656.5" cy="542.2" r="1.75" fill="#241e14" stroke="#17130c" stroke-width="0.7"/>
<circle cx="656.7" cy="542.1" r="0.45" fill="#5a503e"/>
<circle cx="655.7" cy="590.7" r="1.75" fill="#241e14" stroke="#17130c" stroke-width="0.7"/>
<circle cx="655.8" cy="590.6" r="0.45" fill="#5a503e"/>
<path d="M688.8 546.8 L709.4 538.8 Q711.1 538.1 711.1 539.9 L710.9 546.7 Q710.9 548.5 709.2 549.2 L688.6 557.2 Q686.9 557.9 686.9 556.1 L687.1 549.3 Q687.1 547.5 688.8 546.8 Z" fill="#786c55" stroke="#1b170f" stroke-width="1.25" stroke-linejoin="round"/>
<polygon points="688.2,547.4 710,538.8 710.7,541.3 687.6,550.3" fill="#6a5f4a"/>
<line x1="691.4" y1="546.1" x2="691.5" y2="548.6" stroke="#2a241a" stroke-width="0.7"/>
<line x1="693.7" y1="545.2" x2="693.9" y2="547.7" stroke="#2a241a" stroke-width="0.7"/>
<line x1="696.1" y1="544.3" x2="696.3" y2="546.8" stroke="#2a241a" stroke-width="0.7"/>
<line x1="698.5" y1="543.3" x2="698.7" y2="545.8" stroke="#2a241a" stroke-width="0.7"/>
<line x1="700.9" y1="542.4" x2="701" y2="544.9" stroke="#2a241a" stroke-width="0.7"/>
<line x1="703.2" y1="541.5" x2="703.4" y2="544" stroke="#2a241a" stroke-width="0.7"/>
<line x1="705.6" y1="540.6" x2="705.8" y2="543.1" stroke="#2a241a" stroke-width="0.7"/>
<line x1="708" y1="539.6" x2="708.2" y2="542.1" stroke="#2a241a" stroke-width="0.7"/>
<line x1="687.4" y1="550.3" x2="710.8" y2="541.2" stroke="#1b170f" stroke-width="0.9"/>
<polygon points="687.5,550.3 691.3,548.8 691.2,555.8 687.4,557.1" fill="#5f5543"/>
<line x1="689.4" y1="549.9" x2="689.3" y2="556.1" stroke="#3a3327" stroke-width="0.6"/>
<line x1="691.3" y1="548.8" x2="691.2" y2="556" stroke="#1b170f" stroke-width="0.9"/>
<polygon points="691.7,549.1 710.5,541.7 710.4,547.1 691.6,554.5" fill="#9a8d71"/>
<line x1="691.2" y1="554.8" x2="710.5" y2="547.3" stroke="#2f291f" stroke-width="0.8"/>
<ellipse cx="695.4" cy="550.3" rx="1.05" ry="1.5" fill="#4b4234" stroke="#1b170f" stroke-width="0.6"/>
<ellipse cx="704.9" cy="546.6" rx="1.05" ry="1.5" fill="#4b4234" stroke="#1b170f" stroke-width="0.6"/>
<line x1="707.3" y1="542.8" x2="707.2" y2="548.5" stroke="#3a3327" stroke-width="0.6"/>
</g>
</svg>
</body>
</html>
